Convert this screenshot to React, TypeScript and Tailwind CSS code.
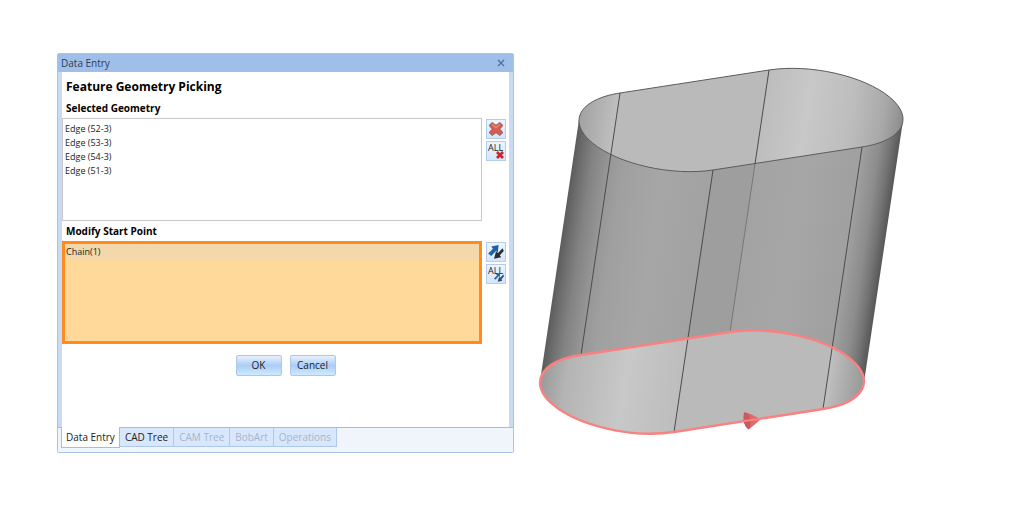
import React from 'react';

const edges = ['Edge (52-3)', 'Edge (53-3)', 'Edge (54-3)', 'Edge (51-3)'];

const tabs = [
  { name: 'CAD Tree', disabled: false },
  { name: 'CAM Tree', disabled: true },
  { name: 'BobArt', disabled: true },
  { name: 'Operations', disabled: true }
];

const TOP_LOOP =
  'M620 93 L769 70 C809.9 63.7 863.9 75.8 889.6 97.1 C915.3 118.4 902.9 140.7 862 147 L713 170 C672.1 176.3 618.1 164.2 592.4 142.9 C566.7 121.6 579.1 99.3 620 93 Z';

const BOTTOM_LOOP =
  'M581 355 L730 332 C770.9 325.7 824.9 337.8 850.6 359.1 C876.3 380.4 863.9 402.7 823 409 L674 432 C633.1 438.3 579.1 426.2 553.4 404.9 C527.7 383.6 540.1 361.3 581 355 Z';

const DeleteIcon = () => (
  <svg className="h-4 w-4" viewBox="0 0 16 16" aria-hidden="true">
    <path
      d="M4.2 1.7 L8 4.6 L11.8 1.7 L14.6 4.4 L11.6 8 L14.6 11.6 L11.8 14.3 L8 11.4 L4.2 14.3 L1.4 11.6 L4.4 8 L1.4 4.4 Z"
      fill="#df5a4a"
      stroke="#a06a70"
      strokeWidth="1.2"
      strokeLinejoin="round"
    />
    <path d="M4.2 3.6 L8 6.6 L11.8 3.6" fill="none" stroke="#ee8468" strokeWidth="1.4" />
  </svg>
);

const FlipIcon = () => (
  <svg className="h-4 w-4" viewBox="0 0 16 16" aria-hidden="true">
    <path d="M0.2 9.6 L5 4.8 L3.2 2.6 L10.6 1 L9.8 8.4 L8 7 L3.2 12 Z" fill="#1f62a5" />
    <path d="M14.6 4.2 L10 9 L8 7.4 L6 14.8 L13.2 13.2 L11.8 11.2 L15.8 7 Z" fill="#2b2f33" />
  </svg>
);

const SmallDelete = () => (
  <svg className="absolute right-0 bottom-0 h-2 w-2" viewBox="0 0 8 8" aria-hidden="true">
    <path d="M1 1 L7 7 M7 1 L1 7" stroke="#c9252d" strokeWidth="2.8" />
  </svg>
);

const SmallFlip = () => (
  <svg className="absolute right-0 bottom-0 h-2.5 w-2.5" viewBox="0 0 8 8" aria-hidden="true">
    <path d="M0 5.2 L2.4 2.8 L1.6 1.8 L5 0.6 L4.6 4 L3.6 3.4 L1.2 6.2 Z" fill="#2467a8" />
    <path d="M7.4 2 L5 4.6 L4 4 L3 7.8 L6.6 7 L6 5.8 L8 3.4 Z" fill="#2d4a66" />
  </svg>
);

interface ToolButtonProps {
  label: string;
  children: React.ReactNode;
}

const ToolButton: React.FC<ToolButtonProps> = ({ label, children }) => (
  <button
    type="button"
    aria-label={label}
    className="flex h-5 w-5 items-center justify-center border border-[#b4cdee] bg-linear-to-b from-[#eef4fd] to-[#d5e6fb]"
  >
    {children}
  </button>
);

const AllLabel: React.FC<{ children: React.ReactNode }> = ({ children }) => (
  <span className="relative block h-4 w-4 text-left text-[9px] leading-[10px] font-medium text-[#222]">
    ALL
    {children}
  </span>
);

const DataEntryPanel = () => (
  <section className="flex w-full max-w-[457px] shrink-0 flex-col rounded-xs border border-[#a9c3e8] bg-[#c9daf3] text-[10px] text-[#222]">
    <header className="flex h-[18px] items-center justify-between bg-[#9fbfe9] pr-2 pl-[3px]">
      <h1 className="text-[#2b3d58]">Data Entry</h1>
      <button type="button" aria-label="Close" className="text-[#4b71a3]">
        <svg className="h-2 w-2" viewBox="0 0 8 8">
          <path d="M1 1 L7 7 M7 1 L1 7" stroke="currentColor" strokeWidth="1.3" />
        </svg>
      </button>
    </header>

    <div className="mx-1 flex flex-col bg-white pb-[51px]">
      <h2 className="h-7 pl-1 text-[12px] leading-[30px] font-bold text-black">
        Feature Geometry Picking
      </h2>
      <h3 className="h-[18px] pl-1 leading-4 font-bold text-black">Selected Geometry</h3>
      <div className="flex gap-1">
        <ul className="h-[103px] flex-1 border border-[#c8c8c8] px-0.5 pt-[3px] text-[9px] leading-[14px]">
          {edges.map(edge => (
            <li key={edge}>{edge}</li>
          ))}
        </ul>
        <div className="mr-[3px] flex flex-col gap-0.5 pt-px">
          <ToolButton label="Remove">
            <DeleteIcon />
          </ToolButton>
          <ToolButton label="Remove all">
            <AllLabel>
              <SmallDelete />
            </AllLabel>
          </ToolButton>
        </div>
      </div>

      <h3 className="h-5 pl-1 leading-5 font-bold text-black">Modify Start Point</h3>
      <div className="flex gap-1">
        <ul className="h-[103px] flex-1 border-3 border-[#ff8a1d] bg-[#ffd999] text-[9px]">
          <li className="h-4 bg-[#f2d8ab] pl-px leading-4">Chain(1)</li>
        </ul>
        <div className="mr-[3px] flex flex-col gap-0.5 pt-px">
          <ToolButton label="Reverse">
            <FlipIcon />
          </ToolButton>
          <ToolButton label="Reverse all">
            <AllLabel>
              <SmallFlip />
            </AllLabel>
          </ToolButton>
        </div>
      </div>

      <div className="mt-[11px] flex justify-center gap-2">
        {['OK', 'Cancel'].map(name => (
          <button
            key={name}
            type="button"
            className="h-[21px] w-[46px] rounded-xs border border-[#b0c6e5] bg-linear-to-b from-[#e9f1fd] via-[#abcdf5] to-[#cdebff]"
          >
            {name}
          </button>
        ))}
      </div>
    </div>

    <nav className="flex h-[25px] items-start border-t border-[#a3bee2] bg-[#f0f4fb] pl-[3px]">
      <button type="button" className="-mt-px h-[21px] border-x border-b border-[#a3bee2] bg-white px-1">
        Data Entry
      </button>
      {tabs.map(tab => (
        <button
          key={tab.name}
          type="button"
          disabled={tab.disabled}
          className="h-[19px] border-r border-b border-[#adc8ed] bg-[#d9e7fc] px-[5px] disabled:text-[#a5b5cd]"
        >
          {tab.name}
        </button>
      ))}
    </nav>
  </section>
);

// Extruded slot, open at both ends, with the picked chain along the bottom
const SlotModel = () => (
  <svg className="w-full max-w-[370px] shrink" viewBox="536 62 370 376" role="img" aria-label="Extruded slot">
    <defs>
      <linearGradient id="wall" gradientUnits="userSpaceOnUse" x1="579.2" y1="118.2" x2="896.2" y2="165.5">
        <stop offset="0" stopColor="#5c5c5c" />
        <stop offset="0.03" stopColor="#717171" />
        <stop offset="0.06" stopColor="#838383" />
        <stop offset="0.114" stopColor="#979797" />
        <stop offset="0.16" stopColor="#a0a0a0" />
        <stop offset="0.28" stopColor="#a6a6a6" />
        <stop offset="0.437" stopColor="#a2a2a2" />
        <stop offset="0.437" stopColor="#9e9e9e" />
        <stop offset="0.563" stopColor="#9e9e9e" />
        <stop offset="0.563" stopColor="#a3a3a3" />
        <stop offset="0.72" stopColor="#a6a6a6" />
        <stop offset="0.886" stopColor="#a0a0a0" />
        <stop offset="0.94" stopColor="#8c8c8c" />
        <stop offset="0.97" stopColor="#757575" />
        <stop offset="1" stopColor="#575757" />
      </linearGradient>
      <linearGradient id="top" gradientUnits="userSpaceOnUse" x1="579.2" y1="118.2" x2="896.2" y2="165.5">
        <stop offset="0" stopColor="#a2a2a2" />
        <stop offset="0.114" stopColor="#bfbfbf" />
        <stop offset="0.114" stopColor="#bababa" />
        <stop offset="0.563" stopColor="#bababa" />
        <stop offset="0.563" stopColor="#bdbdbd" />
        <stop offset="0.7" stopColor="#c8c8c8" />
        <stop offset="0.84" stopColor="#bdbdbd" />
        <stop offset="0.94" stopColor="#a8a8a8" />
        <stop offset="1" stopColor="#8c8c8c" />
      </linearGradient>
      <linearGradient id="bottom" gradientUnits="userSpaceOnUse" x1="540.2" y1="379.7" x2="857.2" y2="427">
        <stop offset="0" stopColor="#999999" />
        <stop offset="0.08" stopColor="#b4b4b4" />
        <stop offset="0.26" stopColor="#c8c8c8" />
        <stop offset="0.437" stopColor="#bdbdbd" />
        <stop offset="0.437" stopColor="#bababa" />
        <stop offset="0.886" stopColor="#bababa" />
        <stop offset="0.886" stopColor="#c0c0c0" />
        <stop offset="1" stopColor="#989898" />
      </linearGradient>
    </defs>

    <path d="M579.2 118.2 L902.8 121.8 L863.8 383.8 L540.2 380.2 Z" fill="url(#wall)" />
    <path d={TOP_LOOP} fill="url(#top)" stroke="#5c5c5c" strokeWidth="1" />
    <path d={BOTTOM_LOOP} fill="url(#bottom)" />
    <g stroke="#4c4c4c" strokeWidth="1">
      <path d="M620 93 L581 355" />
      <path d="M713 170 L674 432" />
      <path d="M862 147 L823 409" />
      <path d="M769 70 L755 164" />
      <path d="M755 164 L730 332" stroke="#777" />
    </g>
    <path d={BOTTOM_LOOP} fill="none" stroke="#fb8080" strokeWidth="2.4" />

    <path d="M744 412.5 Q748 411.5 760.5 419.5 Q752 427 748.5 429.5 Q742 424 744 412.5 Z" fill="#dc6c6c" />
    <path d="M744 412.5 Q749 412 750.5 420 Q751 427 748.5 429.5 Q742 425 744 412.5 Z" fill="#c95b5e" />
    <path d="M744 421 L760 419" stroke="#fb8080" strokeWidth="2" />
  </svg>
);

const App: React.FC = () => {
  return (
    <main className="flex min-h-screen items-start gap-[22px] bg-white pt-[53px] pr-4 pl-[57px] font-['Open_Sans','Noto_Sans',sans-serif]">
      <DataEntryPanel />
      <div className="min-w-0 flex-1 pt-[9px]">
        <SlotModel />
      </div>
    </main>
  );
};

export default App;
